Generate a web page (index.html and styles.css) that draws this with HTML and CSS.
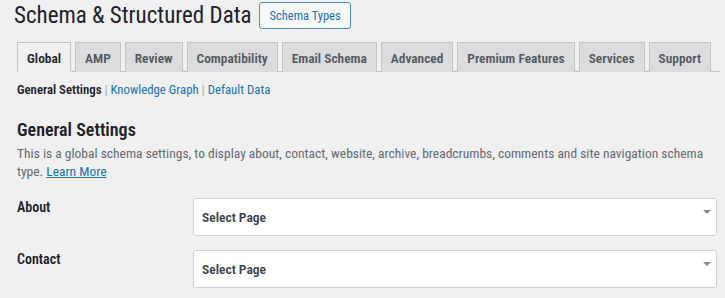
FILE: index.html
```html
<!DOCTYPE html>
<html>
<head>
<meta charset="utf-8">
<link rel="stylesheet" href="styles.css">
</head>
<body>
<div class="wrap">
  <div class="title-row">
    <h1 class="title">Schema &amp; Structured Data</h1>
    <a class="btn" href="#">Schema Types</a>
  </div>
  <nav class="tabs">
    <a class="tab active" href="#">Global</a>
    <a class="tab" href="#">AMP</a>
    <a class="tab" href="#">Review</a>
    <a class="tab" href="#">Compatibility</a>
    <a class="tab" href="#">Email Schema</a>
    <a class="tab" href="#">Advanced</a>
    <a class="tab" href="#">Premium Features</a>
    <a class="tab" href="#">Services</a>
    <a class="tab" href="#">Support</a>
  </nav>
  <div class="subnav">
    <span class="current">General Settings</span> <span class="sep">|</span> <a href="#">Knowledge Graph</a> <span class="sep">|</span> <a href="#">Default Data</a>
  </div>
  <h2 class="heading">General Settings</h2>
  <p class="desc">This is a global schema settings, to display about, contact, website, archive, breadcrumbs, comments and site navigation schema type. <a href="#">Learn More</a></p>
  <div class="form">
    <div class="row">
      <div class="label">About</div>
      <div class="select"><span>Select Page</span><i class="arrow"></i></div>
    </div>
    <div class="row">
      <div class="label">Contact</div>
      <div class="select"><span>Select Page</span><i class="arrow"></i></div>
    </div>
  </div>
</div>
</body>
</html>
```
FILE: styles.css
```css
* { box-sizing: border-box; }
html, body { margin: 0; padding: 0; background: #f0f0f1; }
body {
  font-family: "Roboto Condensed", "Open Sans", sans-serif;
  font-size: 13px;
  color: #3c434a;
  overflow: hidden;
}
.wrap { padding: 0 5px 0 17px; }
.title-row { display: flex; align-items: center; gap: 8px; height: 31px; margin-left: -3px; }
.title { margin: 0; font-size: 23px; font-weight: 400; color: #1d2327; line-height: 31px; white-space: nowrap; }
.btn {
  display: inline-block;
  font-size: 12.5px;
  line-height: 25px;
  padding: 0 9px;
  color: #2271b1;
  border: 1px solid #4a8cc4;
  border-radius: 3px;
  background: #f6f7f7;
  text-decoration: none;
  margin-top: -1px;
  white-space: nowrap;
}
.tabs {
  display: flex;
  gap: 4px;
  margin-top: 11px;
  border-bottom: 1px solid #c3c4c7;
}
.tab {
  display: block;
  padding: 3px 9px 0;
  line-height: 26px;
  font-size: 13.4px;
  font-weight: 600;
  color: #50575e;
  background: #dcdcde;
  border: 1px solid #c3c4c7;
  border-bottom: none;
  text-decoration: none;
  margin-bottom: -1px;
  height: 30px;
  white-space: nowrap;
}
.tab.active {
  background: #f0f0f1;
  color: #1d2327;
  border-bottom: 1px solid #f0f0f1;
}
.subnav { margin-top: 8px; line-height: 20px; font-size: 12.8px; }
.subnav .current { font-weight: 600; color: #1d2327; }
.subnav a { color: #2271b1; text-decoration: none; }
.subnav .sep { color: #a7aaad; }
.heading { margin: 18px 0 0; font-size: 18px; font-weight: 600; color: #1d2327; line-height: 24px; }
.desc { margin: 2px 0 0; color: #646970; line-height: 18px; font-size: 13.5px; }
.desc a { color: #2271b1; text-underline-offset: 1px; }
.form { margin-top: 18px; display: flex; flex-direction: column; gap: 14px; }
.row { display: flex; }
.label { width: 176px; font-size: 14px; font-weight: 600; color: #1d2327; padding-top: 0; line-height: 18px; }
.select {
  flex: 1;
  height: 38px;
  margin-right: 3px;
  background: #fff;
  border: 1px solid #d0d0d3;
  border-radius: 3px;
  display: flex;
  align-items: center;
  padding: 0 5px 0 8px;
  color: #3c434a;
  font-size: 13.5px;
  font-weight: 600;
}
.select span { flex: 1; }
.arrow {
  width: 0; height: 0;
  border-left: 4px solid transparent;
  border-right: 4px solid transparent;
  border-top: 4px solid #888;
  margin-top: -11px;
}
```
